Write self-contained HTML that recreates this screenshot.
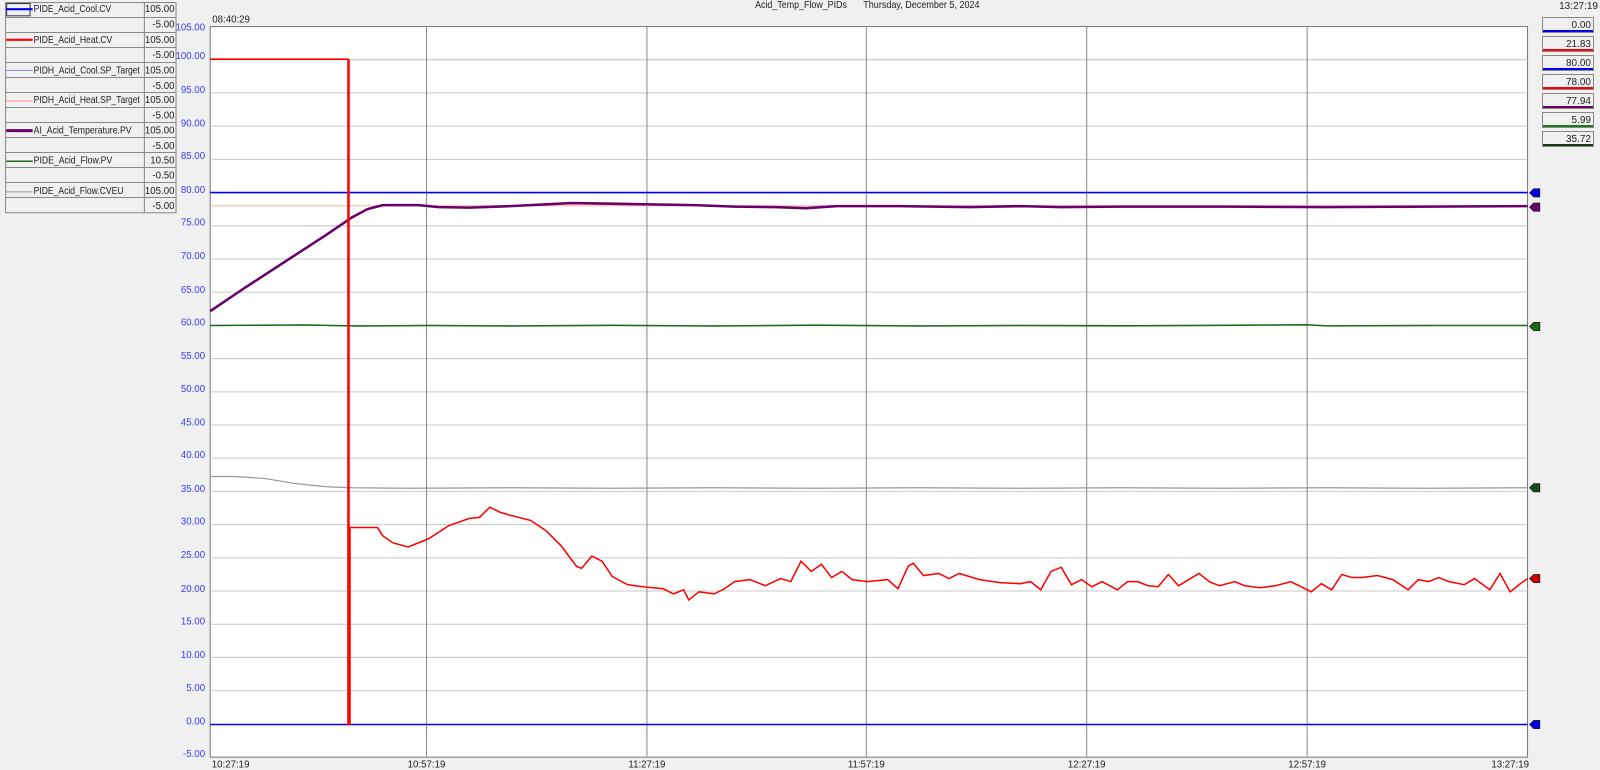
<!DOCTYPE html>
<html><head><meta charset="utf-8"><style>
html,body{margin:0;padding:0;background:#f0f0f0;width:1600px;height:770px;overflow:hidden}
svg{display:block;font-family:"Liberation Sans",sans-serif}
</style></head><body>
<svg width="1600" height="770" viewBox="0 0 1600 770" xmlns="http://www.w3.org/2000/svg">
<rect x="0" y="0" width="1600" height="770" fill="#f0f0f0"/>
<g transform="scale(1.0204)">
<!-- legend table -->
<g font-size="9.5" fill="#222">
<rect x="5.5" y="2.5" width="167" height="206" fill="#f0f0f0" stroke="#888"/>
<line x1="141.5" y1="2" x2="141.5" y2="208" stroke="#888"/>
<g stroke="#888">
<line x1="5" y1="17.2" x2="172" y2="17.2"/><line x1="5" y1="31.9" x2="172" y2="31.9"/>
<line x1="5" y1="46.6" x2="172" y2="46.6"/><line x1="5" y1="61.3" x2="172" y2="61.3"/>
<line x1="5" y1="76" x2="172" y2="76"/><line x1="5" y1="90.7" x2="172" y2="90.7"/>
<line x1="5" y1="105.4" x2="172" y2="105.4"/><line x1="5" y1="120.1" x2="172" y2="120.1"/>
<line x1="5" y1="134.8" x2="172" y2="134.8"/><line x1="5" y1="149.5" x2="172" y2="149.5"/>
<line x1="5" y1="164.2" x2="172" y2="164.2"/><line x1="5" y1="178.9" x2="172" y2="178.9"/>
<line x1="5" y1="193.6" x2="172" y2="193.6"/>
</g>
<rect x="6.5" y="3.5" width="23" height="12" fill="none" stroke="#333"/>
<line x1="6" y1="9" x2="32" y2="9" stroke="#0000ee" stroke-width="2"/>
<line x1="6" y1="39" x2="32" y2="39" stroke="#ff0000" stroke-width="2"/>
<line x1="6" y1="69" x2="32" y2="69" stroke="#8080ff" stroke-width="1"/>
<line x1="6" y1="99" x2="32" y2="99" stroke="#ffb0b0" stroke-width="1.5"/>
<line x1="6" y1="128" x2="32" y2="128" stroke="#6a006a" stroke-width="3"/>
<line x1="6" y1="158" x2="32" y2="158" stroke="#1a6a1a" stroke-width="1.5"/>
<line x1="6" y1="188" x2="32" y2="188" stroke="#999" stroke-width="1"/>
<text x="33" y="12" textLength="76" lengthAdjust="spacingAndGlyphs">PIDE_Acid_Cool.CV</text>
<text x="33" y="42" textLength="77" lengthAdjust="spacingAndGlyphs">PIDE_Acid_Heat.CV</text>
<text x="33" y="72" textLength="104" lengthAdjust="spacingAndGlyphs">PIDH_Acid_Cool.SP_Target</text>
<text x="33" y="101" textLength="104" lengthAdjust="spacingAndGlyphs">PIDH_Acid_Heat.SP_Target</text>
<text x="33" y="131" textLength="96" lengthAdjust="spacingAndGlyphs">AI_Acid_Temperature.PV</text>
<text x="33" y="160" textLength="77" lengthAdjust="spacingAndGlyphs">PIDE_Acid_Flow.PV</text>
<text x="33" y="190" textLength="88" lengthAdjust="spacingAndGlyphs">PIDE_Acid_Flow.CVEU</text>
<g text-anchor="end">
<text x="171" y="12">105.00</text><text x="171" y="27">-5.00</text>
<text x="171" y="42">105.00</text><text x="171" y="57">-5.00</text>
<text x="171" y="72">105.00</text><text x="171" y="87">-5.00</text>
<text x="171" y="101">105.00</text><text x="171" y="116">-5.00</text>
<text x="171" y="131">105.00</text><text x="171" y="146">-5.00</text>
<text x="171" y="160">10.50</text><text x="171" y="175">-0.50</text>
<text x="171" y="190">105.00</text><text x="171" y="205">-5.00</text>
</g>
</g>
<!-- title -->
<g font-size="9.5" fill="#222">
<text x="208" y="22">08:40:29</text>
<text x="740" y="8" textLength="90" lengthAdjust="spacingAndGlyphs">Acid_Temp_Flow_PIDs</text>
<text x="846" y="8" textLength="114" lengthAdjust="spacingAndGlyphs">Thursday, December 5, 2024</text>
</g>
<!-- plot -->
<rect x="206" y="26" width="1291" height="716" fill="#fff" stroke="#777"/>
<g stroke="#c8c8c8" stroke-width="1">
<line x1="206" y1="58.5" x2="1497" y2="58.5"/><line x1="206" y1="91" x2="1497" y2="91"/>
<line x1="206" y1="123.6" x2="1497" y2="123.6"/><line x1="206" y1="156.2" x2="1497" y2="156.2"/>
<line x1="206" y1="221.3" x2="1497" y2="221.3"/>
<line x1="206" y1="253.8" x2="1497" y2="253.8"/><line x1="206" y1="286.3" x2="1497" y2="286.3"/>
<line x1="206" y1="351.4" x2="1497" y2="351.4"/><line x1="206" y1="384" x2="1497" y2="384"/>
<line x1="206" y1="416.5" x2="1497" y2="416.5"/><line x1="206" y1="449" x2="1497" y2="449"/>
<line x1="206" y1="514.1" x2="1497" y2="514.1"/><line x1="206" y1="546.7" x2="1497" y2="546.7"/>
<line x1="206" y1="579.2" x2="1497" y2="579.2"/><line x1="206" y1="611.8" x2="1497" y2="611.8"/>
<line x1="206" y1="644.3" x2="1497" y2="644.3"/><line x1="206" y1="676.9" x2="1497" y2="676.9"/>
<line x1="206" y1="318.9" x2="1497" y2="318.9"/><line x1="206" y1="481.6" x2="1497" y2="481.6"/>
</g>
<g stroke="#888" stroke-width="1">
<line x1="418" y1="26" x2="418" y2="742"/><line x1="634" y1="26" x2="634" y2="742"/>
<line x1="849" y1="26" x2="849" y2="742"/><line x1="1065" y1="26" x2="1065" y2="742"/>
<line x1="1281" y1="26" x2="1281" y2="742"/>
</g>
<!-- y labels -->
<g font-size="9.5" fill="#3a3aff" text-anchor="end">
<text x="201" y="30">105.00</text><text x="201" y="58">100.00</text><text x="201" y="91">95.00</text>
<text x="201" y="124">90.00</text><text x="201" y="156">85.00</text><text x="201" y="189">80.00</text>
<text x="201" y="221">75.00</text><text x="201" y="254">70.00</text><text x="201" y="287">65.00</text>
<text x="201" y="319">60.00</text><text x="201" y="352">55.00</text><text x="201" y="384">50.00</text>
<text x="201" y="417">45.00</text><text x="201" y="449">40.00</text><text x="201" y="482">35.00</text>
<text x="201" y="514">30.00</text><text x="201" y="547">25.00</text><text x="201" y="580">20.00</text>
<text x="201" y="612">15.00</text><text x="201" y="645">10.00</text><text x="201" y="677">5.00</text>
<text x="201" y="710">0.00</text><text x="201" y="742">-5.00</text>
</g>
<g font-size="9.5" fill="#222" text-anchor="middle">
<text x="226" y="752">10:27:19</text><text x="418" y="752">10:57:19</text><text x="634" y="752">11:27:19</text>
<text x="849" y="752">11:57:19</text><text x="1065" y="752">12:27:19</text><text x="1281" y="752">12:57:19</text>
<text x="1480" y="752">13:27:19</text>
</g>
<!-- traces -->
<line x1="206" y1="201.7" x2="1497" y2="201.7" stroke="#ffb0b0" stroke-width="1.2"/>
<line x1="206" y1="188.7" x2="1497" y2="188.7" stroke="#0000ee" stroke-width="1.5"/>
<line x1="206" y1="710" x2="1497" y2="710" stroke="#0000ee" stroke-width="1.5"/>
<polyline fill="none" stroke="#1a6a1a" stroke-width="1.5" points="206,319 300,318.5 350,319.5 420,319 500,319.5 600,318.8 700,319.5 800,318.7 900,319.5 1000,319 1100,319.3 1200,318.8 1280,318.3 1300,319.4 1400,319 1497,319"/>
<polyline fill="none" stroke="#999" stroke-width="1.2" points="206,467 230,467 260,469 290,474 320,477 345,478 400,478.5 500,478 600,478.5 700,478 800,478.5 900,478 1000,478.5 1100,478 1200,478.5 1300,478 1400,478.5 1497,478"/>
<polyline fill="none" stroke="#6a006a" stroke-width="2.5" points="206,305 240,282 280,256 320,230 345,213 360,205 375,201 410,201 430,203 460,203.5 500,202 560,199 620,200 680,201 720,202.5 760,203 790,204 820,202 880,202 950,203 1000,202 1040,203 1100,202.5 1200,202.5 1300,203 1400,202.5 1497,202"/>
<polyline fill="none" stroke="#ff0000" stroke-width="1.5" points="206,58 341,58 341,710 343,710 343,517 370,517 375,525 385,532 400,536 410,532 420,528 440,515 460,508 470,507 480,497 490,502 500,505 520,510 535,520 550,535 565,555 570,557 580,545 590,550 600,565 615,573 630,575 650,577 660,582 670,578 675,588 685,580 700,582 710,577 720,570 735,568 750,574 765,567 775,570 785,550 795,560 805,553 815,566 825,560 835,568 850,570 870,568 880,577 890,555 895,552 905,564 920,562 930,567 940,562 960,568 980,571 1000,572 1010,570 1020,578 1030,560 1040,556 1050,573 1060,568 1070,575 1080,570 1095,578 1105,570 1115,570 1125,574 1135,575 1145,563 1155,574 1165,568 1175,562 1185,570 1195,574 1210,570 1220,574 1235,576 1250,574 1265,570 1275,575 1285,580 1295,572 1305,578 1315,563 1325,566 1335,566 1350,564 1365,568 1380,578 1390,568 1400,570 1410,566 1420,570 1435,573 1445,567 1460,578 1470,562 1480,580 1490,572 1497,567"/>
<line x1="342" y1="58" x2="342" y2="710" stroke="#ff0000" stroke-width="1.5"/>
<!-- end markers -->
<g stroke="#222" stroke-width="0.8">
<path d="M1499,189 L1503,185 L1509,185 L1509,193 L1503,193 Z" fill="#0000ee"/>
<path d="M1499,203 L1503,199 L1509,199 L1509,207 L1503,207 Z" fill="#6a006a"/>
<path d="M1499,320 L1503,316 L1509,316 L1509,324 L1503,324 Z" fill="#1a6a1a"/>
<path d="M1499,478 L1503,474 L1509,474 L1509,482 L1503,482 Z" fill="#1a4a1a"/>
<path d="M1499,567 L1503,563 L1509,563 L1509,571 L1503,571 Z" fill="#cc0000"/>
<path d="M1499,710 L1503,706 L1509,706 L1509,714 L1503,714 Z" fill="#0000ee"/>
</g>
</g>
<!-- right value boxes (unscaled) -->
<g font-size="10" fill="#222" text-anchor="end">
<text x="1598" y="9">13:27:19</text>
<rect x="1542.5" y="17.5" width="51" height="15" fill="#f0f0f0" stroke="#888"/><line x1="1543" y1="31" x2="1593" y2="31" stroke="#0000ee" stroke-width="2"/><text x="1591" y="28">0.00</text>
<rect x="1542.5" y="36.5" width="51" height="15" fill="#f0f0f0" stroke="#888"/><line x1="1543" y1="50" x2="1593" y2="50" stroke="#ff0000" stroke-width="2"/><text x="1591" y="47">21.83</text>
<rect x="1542.5" y="55.5" width="51" height="15" fill="#f0f0f0" stroke="#888"/><line x1="1543" y1="69" x2="1593" y2="69" stroke="#0000ee" stroke-width="2"/><text x="1591" y="66">80.00</text>
<rect x="1542.5" y="74.5" width="51" height="15" fill="#f0f0f0" stroke="#888"/><line x1="1543" y1="88" x2="1593" y2="88" stroke="#ff0000" stroke-width="2"/><text x="1591" y="85">78.00</text>
<rect x="1542.5" y="93.5" width="51" height="15" fill="#f0f0f0" stroke="#888"/><line x1="1543" y1="107" x2="1593" y2="107" stroke="#6a006a" stroke-width="2"/><text x="1591" y="104">77.94</text>
<rect x="1542.5" y="112.5" width="51" height="15" fill="#f0f0f0" stroke="#888"/><line x1="1543" y1="126" x2="1593" y2="126" stroke="#1a7a1a" stroke-width="2"/><text x="1591" y="123">5.99</text>
<rect x="1542.5" y="131.5" width="51" height="15" fill="#f0f0f0" stroke="#888"/><line x1="1543" y1="145" x2="1593" y2="145" stroke="#1a3a1a" stroke-width="2"/><text x="1591" y="142">35.72</text>
</g>
</svg>
</body></html>
